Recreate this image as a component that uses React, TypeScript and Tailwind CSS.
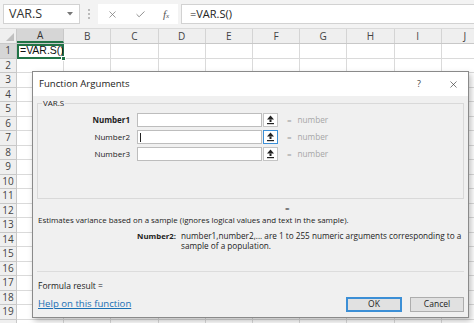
import { X, Check } from 'lucide-react';

const cols = ['A', 'B', 'C', 'D', 'E', 'F', 'G', 'H', 'I', 'J'];
const rows = Array.from({ length: 20 }, (_, i) => i + 1);

function RefButton({ focused }: { focused?: boolean }) {
  return (
    <div
      className={`w-[15px] h-[14px] ml-[1px] flex items-center justify-center bg-white border ${
        focused ? 'border-[#3c8fd6]' : 'border-[#c4c4c4]'
      }`}
    >
      <svg width="9" height="10" viewBox="0 0 9 10">
        <polygon points="4.5,0.5 1,4.5 8,4.5" fill="#222" />
        <rect x="3.5" y="4.5" width="2" height="2.5" fill="#222" />
        <rect x="1" y="8" width="7" height="1.2" fill="#222" />
      </svg>
    </div>
  );
}

function ArgRow({ label, bold, focused }: { label: string; bold?: boolean; focused?: boolean }) {
  return (
    <div className="flex items-center h-[14px]">
      <div className={`w-[99px] text-right pr-[7px] text-[8px] text-[#222] ${bold ? 'font-bold' : ''}`}>
        {label}
      </div>
      <div className="w-[125px] h-[14px] bg-white border border-[#bdbdbd] flex items-center pl-[2px]">
        {focused && <div className="w-[1px] h-[9px] bg-[#222]" />}
      </div>
      <RefButton focused={focused} />
      <div className="ml-[9px] text-[8px] text-[#999]">=</div>
      <div className="ml-[6px] text-[8.2px] text-[#a6a6a6]">number</div>
    </div>
  );
}

function Dialog() {
  return (
    <div
      className="absolute left-[32px] top-[71px] w-[437px] h-[247px] bg-[#f0f0f0] border border-[#8a8a8a] shadow-[2px_3px_6px_rgba(0,0,0,0.25)] flex flex-col text-[#222]"
      style={{ fontFamily: '"Open Sans", "Noto Sans", sans-serif' }}
    >
      <div className="h-[24px] bg-white flex items-center pl-[6px] pr-[9px]">
        <div className="text-[9.6px] text-[#222]">Function Arguments</div>
        <div className="ml-auto text-[9px] text-[#444]">?</div>
        <X className="ml-[27px] w-[11px] h-[11px] text-[#333]" strokeWidth={1.4} />
      </div>

      <div className="flex flex-col px-[4px] flex-1">
        <div className="relative mt-[7px] h-[96px] border border-[#d9d9d9] pt-[9px] flex flex-col gap-[3px]">
          <span className="absolute left-[4px] top-[-7px] px-[1px] bg-[#f0f0f0] text-[8px] leading-[12px]">VAR.S</span>
          <ArgRow label="Number1" bold />
          <ArgRow label="Number2" focused />
          <ArgRow label="Number3" />
        </div>

        <div className="h-[10px] mt-[4px] text-[8px] leading-[10px] pl-[248px]">=</div>
        <div className="mt-[2px] text-[7.9px] leading-[10px] pl-[1px] whitespace-nowrap">
          Estimates variance based on a sample (ignores logical values and text in the sample).
        </div>
        <div className="mt-[6px] flex text-[8.2px] leading-[10px]">
          <div className="w-[144px] shrink-0 text-right font-bold pr-[5px] text-[7.8px]">Number2:</div>
          <div className="flex flex-col whitespace-nowrap">
            <span>number1,number2,... are 1 to 255 numeric arguments corresponding to a</span>
            <span>sample of a population.</span>
          </div>
        </div>

        <div className="mt-[20px] h-[1px] bg-[#dcdcdc]" />

        <div className="mt-[9px] text-[8.5px] leading-[10px] pl-[1px]">Formula result =</div>

        <div className="mt-[6px] flex items-center">
          <span className="pl-[1px] text-[9.6px] text-[#1a6fb3] underline">Help on this function</span>
          <div className="ml-auto flex gap-[8px]">
            <div className="w-[56px] h-[15px] bg-[#e1e1e1] border-2 border-[#3c8fd6] flex items-center justify-center text-[8.5px]">
              OK
            </div>
            <div className="w-[54px] h-[15px] bg-[#e1e1e1] border border-[#adadad] flex items-center justify-center text-[8.5px]">
              Cancel
            </div>
          </div>
        </div>
      </div>
    </div>
  );
}

function Cell({ active }: { active: boolean }) {
  if (active) {
    return (
      <div className="w-[47.2px] shrink-0 relative border-2 border-[#217346] flex items-center">
        <span className="pl-[1px] text-[10.5px] text-[#111] whitespace-nowrap" style={{ fontFamily: '"Liberation Sans", sans-serif' }}>
          =VAR.S()
        </span>
        <div className="absolute right-[-4px] bottom-[-4px] w-[5px] h-[5px] bg-[#217346] border border-white" />
      </div>
    );
  }
  return <div className="w-[47.2px] shrink-0 border-r border-b border-[#dadada]" />;
}

export default function App() {
  return (
    <div
      className="relative w-[474px] h-[323px] overflow-hidden bg-white"
      style={{ fontFamily: '"Open Sans", "Noto Sans", sans-serif' }}
    >
      {/* formula bar */}
      <div className="h-[29px] bg-[#f3f3f3] flex items-center pl-[3px] border-b border-[#dadada]">
        <div className="w-[77px] h-[20px] bg-white border border-[#d2d2d2] flex items-center pl-[5px] pr-[6px]">
          <span className="text-[12.5px] text-[#333]">VAR.S</span>
          <svg className="ml-auto" width="6" height="4" viewBox="0 0 6 4">
            <polygon points="0,0 6,0 3,3.5" fill="#777" />
          </svg>
        </div>
        <div className="w-[20px] flex flex-col items-center gap-[2px] ml-[-1px]">
          <div className="w-[2px] h-[2px] bg-[#bbb]" />
          <div className="w-[2px] h-[2px] bg-[#bbb]" />
          <div className="w-[2px] h-[2px] bg-[#bbb]" />
        </div>
        <div className="w-[80px] h-[20px] bg-white flex items-center ml-[-1px]">
          <X className="ml-[9px] w-[11px] h-[11px] text-[#777]" strokeWidth={1.6} />
          <Check className="ml-[17px] w-[11px] h-[11px] text-[#777]" strokeWidth={1.8} />
          <span className="ml-[17px] text-[11px] italic text-[#555]" style={{ fontFamily: '"Liberation Serif", serif' }}>
            f<span className="text-[7px]">x</span>
          </span>
        </div>
        <div className="flex-1 h-[20px] bg-white border border-[#d2d2d2] border-r-0 ml-[3px] flex items-center pl-[8px]">
          <span className="text-[11px] text-[#222]">=VAR.S()</span>
        </div>
      </div>

      {/* column headers */}
      <div className="flex h-[15px] bg-[#efefef] border-b border-[#c8c8c8]">
        <div className="w-[17px] shrink-0 border-r border-[#c8c8c8] relative">
          <svg className="absolute right-[2px] bottom-[2px]" width="8" height="8" viewBox="0 0 8 8">
            <polygon points="8,0 8,8 0,8" fill="#c0c0c0" />
          </svg>
        </div>
        {cols.map((c, i) => (
          <div
            key={c}
            className={
              i === 0
                ? 'w-[47.2px] shrink-0 flex items-center justify-center text-[10px] text-[#333] bg-[#d6d6d6] border-r border-[#c8c8c8] border-b-2 border-b-[#217346]'
                : 'w-[47.2px] shrink-0 flex items-center justify-center text-[10px] text-[#444] border-r border-[#d4d4d4]'
            }
          >
            {c}
          </div>
        ))}
      </div>

      {/* grid rows */}
      {rows.map((r) => (
        <div key={r} className="flex h-[14.5px]">
          <div
            className={`w-[17px] shrink-0 flex items-center justify-center text-[10px] text-[#444] border-r border-b border-[#c8c8c8] ${
              r === 1 ? 'bg-[#d6d6d6]' : 'bg-[#efefef]'
            }`}
          >
            {r < 20 ? r : ''}
          </div>
          {cols.map((c, i) => (
            <Cell key={c} active={r === 1 && i === 0} />
          ))}
        </div>
      ))}

      <Dialog />
    </div>
  );
}
